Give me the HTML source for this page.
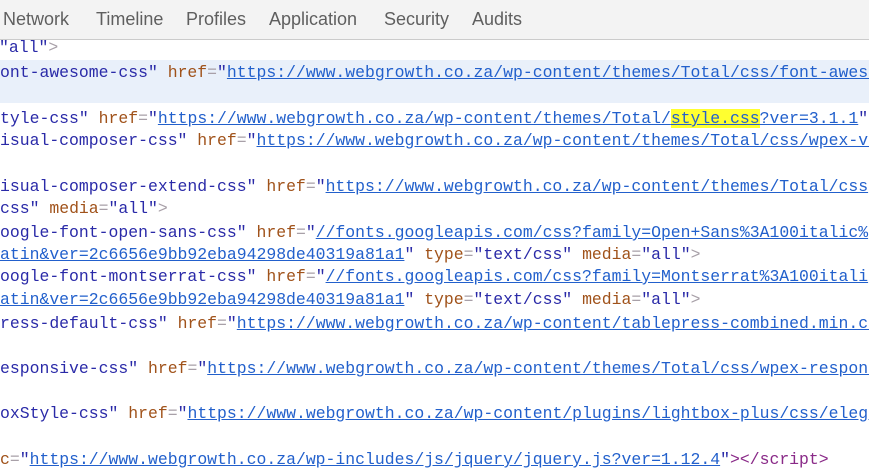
<!DOCTYPE html>
<html style="overflow:hidden"><head><style>
body{margin:0;width:869px;height:469px;overflow:hidden;background:#fff;position:relative}
.tabs{position:absolute;left:0;top:0;width:869px;height:39px;background:#f3f3f3;border-bottom:1px solid #cbcbcb}
.tab{position:absolute;top:9px;font:18px "Liberation Sans",sans-serif;color:#5f5f5f}
.hl{position:absolute;left:0;top:60px;width:869px;height:43px;background:#e9f0fa}
.wrap{position:absolute;left:0;top:0;width:869px;height:469px;overflow:hidden}
.l{position:absolute;left:0;white-space:pre;font:16.45px/20px "Liberation Mono",monospace;color:#222}
.a{color:#a0521a}.v{color:#2a2aa8}.p{color:#a8a0a8}.t{color:#8a2a88}
.u{color:#2260cc;text-decoration:underline}
.y{background:#ffff30}
</style></head><body>
<div class="tabs">
<span class="tab" style="left:3px">Network</span>
<span class="tab" style="left:96px">Timeline</span>
<span class="tab" style="left:186px">Profiles</span>
<span class="tab" style="left:269px">Application</span>
<span class="tab" style="left:384px">Security</span>
<span class="tab" style="left:472px">Audits</span>
</div>
<div class="hl"></div>
<div class="wrap">
<div class="l" style="top:38px;left:-1px"><span class="v">"all"</span><span class="p">&gt;</span></div>
<div class="l" style="top:63px"><span class="v">ont-awesome-css"</span> <span class="a">href</span><span class="p">=</span><span class="v">"</span><span class="u">https://www.webgrowth.co.za/wp-content/themes/Total/css/font-awesome.min.css</span></div>
<div class="l" style="top:109px"><span class="v">tyle-css"</span> <span class="a">href</span><span class="p">=</span><span class="v">"</span><span class="u">https://www.webgrowth.co.za/wp-content/themes/Total/<span class="y">style.css</span>?ver=3.1.1</span><span class="v">"</span></div>
<div class="l" style="top:131px"><span class="v">isual-composer-css"</span> <span class="a">href</span><span class="p">=</span><span class="v">"</span><span class="u">https://www.webgrowth.co.za/wp-content/themes/Total/css/wpex-visual</span></div>
<div class="l" style="top:177px"><span class="v">isual-composer-extend-css"</span> <span class="a">href</span><span class="p">=</span><span class="v">"</span><span class="u">https://www.webgrowth.co.za/wp-content/themes/Total/css</span></div>
<div class="l" style="top:199px"><span class="v">css"</span> <span class="a">media</span><span class="p">=</span><span class="v">"all"</span><span class="p">&gt;</span></div>
<div class="l" style="top:223px"><span class="v">oogle-font-open-sans-css"</span> <span class="a">href</span><span class="p">=</span><span class="v">"</span><span class="u">//fonts.googleapis.com/css?family=Open+Sans%3A100italic%</span></div>
<div class="l" style="top:245px"><span class="u">atin&amp;ver=2c6656e9bb92eba94298de40319a81a1</span><span class="v">"</span> <span class="a">type</span><span class="p">=</span><span class="v">"text/css"</span> <span class="a">media</span><span class="p">=</span><span class="v">"all"</span><span class="p">&gt;</span></div>
<div class="l" style="top:267px"><span class="v">oogle-font-montserrat-css"</span> <span class="a">href</span><span class="p">=</span><span class="v">"</span><span class="u">//fonts.googleapis.com/css?family=Montserrat%3A100itali</span></div>
<div class="l" style="top:290px"><span class="u">atin&amp;ver=2c6656e9bb92eba94298de40319a81a1</span><span class="v">"</span> <span class="a">type</span><span class="p">=</span><span class="v">"text/css"</span> <span class="a">media</span><span class="p">=</span><span class="v">"all"</span><span class="p">&gt;</span></div>
<div class="l" style="top:314px"><span class="v">ress-default-css"</span> <span class="a">href</span><span class="p">=</span><span class="v">"</span><span class="u">https://www.webgrowth.co.za/wp-content/tablepress-combined.min.css</span></div>
<div class="l" style="top:359px"><span class="v">esponsive-css"</span> <span class="a">href</span><span class="p">=</span><span class="v">"</span><span class="u">https://www.webgrowth.co.za/wp-content/themes/Total/css/wpex-responsive</span></div>
<div class="l" style="top:404px"><span class="v">oxStyle-css"</span> <span class="a">href</span><span class="p">=</span><span class="v">"</span><span class="u">https://www.webgrowth.co.za/wp-content/plugins/lightbox-plus/css/elegant</span></div>
<div class="l" style="top:450px"><span class="a">c</span><span class="p">=</span><span class="v">"</span><span class="u">https://www.webgrowth.co.za/wp-includes/js/jquery/jquery.js?ver=1.12.4</span><span class="v">"</span><span class="t">&gt;&lt;/script&gt;</span></div>
</div>
</body></html>
